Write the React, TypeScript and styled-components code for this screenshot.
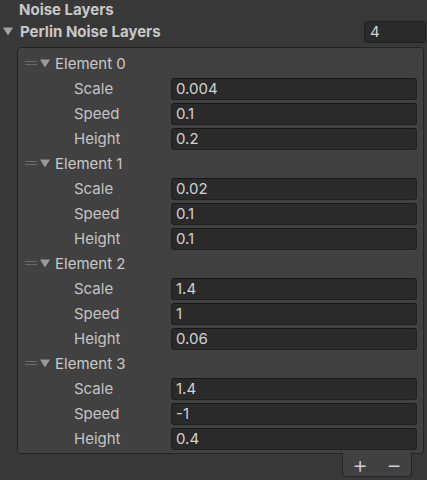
import React from "react";
import styled, { createGlobalStyle } from "styled-components";

type Layer = { scale: string; speed: string; height: string };

const layers: Layer[] = [
  { scale: "0.004", speed: "0.1", height: "0.2" },
  { scale: "0.02", speed: "0.1", height: "0.1" },
  { scale: "1.4", speed: "1", height: "0.06" },
  { scale: "1.4", speed: "-1", height: "0.4" },
];

const Triangle = ({ dim }: { dim?: boolean }) => (
  <svg width="10" height="9" viewBox="0 0 10 9">
    <path d="M0 0.5 H10 L5 8.5 Z" fill={dim ? "#999999" : "#a4a4a4"} />
  </svg>
);

const Handle = () => (
  <svg width="12" height="5" viewBox="0 0 12 5">
    <rect x="0" y="0" width="12" height="1" fill="#6a6a6a" />
    <rect x="0" y="3" width="12" height="1" fill="#6a6a6a" />
  </svg>
);

const Property = ({ label, value }: { label: string; value: string }) => (
  <PropRow>
    <PropLabel>{label}</PropLabel>
    <Field>{value}</Field>
  </PropRow>
);

export default function App() {
  return (
    <>
      <GlobalStyle />
      <Inspector>
        <SectionTitle>Noise Layers</SectionTitle>
        <FoldoutRow>
          <FoldArrow>
            <Triangle />
          </FoldArrow>
          <FoldoutLabel>Perlin Noise Layers</FoldoutLabel>
          <SizeField>4</SizeField>
        </FoldoutRow>
        <ListBox>
          {layers.map((layer, i) => (
            <ElementBlock key={i}>
              <ElementHeader>
                <HandleWrap>
                  <Handle />
                </HandleWrap>
                <Triangle dim />
                <ElementLabel>Element {i}</ElementLabel>
              </ElementHeader>
              <Property label="Scale" value={layer.scale} />
              <Property label="Speed" value={layer.speed} />
              <Property label="Height" value={layer.height} />
            </ElementBlock>
          ))}
        </ListBox>
        <FooterRow>
          <ListFooter>
            <FooterButton>+</FooterButton>
            <FooterButton>−</FooterButton>
          </ListFooter>
        </FooterRow>
      </Inspector>
    </>
  );
}

const GlobalStyle = createGlobalStyle`
  html, body {
    margin: 0;
    padding: 0;
    background: #383838;
  }
  body {
    font-family: Inter, "Noto Sans", sans-serif;
    font-size: 15px;
    color: #c4c4c4;
  }
`;

const Inspector = styled.div`
  width: 427px;
  height: 480px;
  overflow: hidden;
  background: #383838;
`;

const SectionTitle = styled.div`
  height: 19px;
  padding-left: 19px;
  display: flex;
  align-items: center;
  font-weight: 700;
  font-size: 15px;
  color: #c8c8c8;
`;

const FoldoutRow = styled.div`
  height: 25px;
  display: flex;
  align-items: center;
`;

const FoldArrow = styled.div`
  width: 17px;
  padding-left: 3px;
  display: flex;
  align-items: center;
`;

const FoldoutLabel = styled.div`
  flex: 1;
  font-weight: 700;
  font-size: 15px;
  color: #c8c8c8;
`;

const SizeField = styled.div`
  width: 55px;
  height: 20px;
  margin-right: 1px;
  padding-left: 5px;
  display: flex;
  align-items: center;
  background: #2a2a2a;
  border: 1px solid #212121;
  border-radius: 3px;
  color: #d2d2d2;
  font-size: 15px;
`;

const ListBox = styled.div`
  margin: 3px 3px 0 17px;
  padding: 3px 0 2px;
  background: #414141;
  border: 1px solid #242424;
  border-radius: 4px;
  box-sizing: border-box;
  height: 407px;
`;

const ElementBlock = styled.div`
  display: flex;
  flex-direction: column;
`;

const ElementHeader = styled.div`
  height: 25px;
  display: flex;
  align-items: center;
  padding-left: 7px;
`;

const HandleWrap = styled.div`
  display: flex;
  align-items: center;
  margin-right: 3px;
  margin-top: -1px;
`;

const ElementLabel = styled.div`
  margin-left: 5px;
  font-size: 15px;
  color: #c8c8c8;
`;

const PropRow = styled.div`
  height: 25px;
  display: flex;
  align-items: center;
`;

const PropLabel = styled.div`
  width: 97px;
  padding-left: 56px;
  font-size: 15px;
  color: #c4c4c4;
`;

const Field = styled.div`
  width: 246px;
  height: 22px;
  box-sizing: border-box;
  padding-left: 4px;
  display: flex;
  align-items: center;
  background: #2a2a2a;
  border: 1px solid #212121;
  border-top-color: #181818;
  border-radius: 3px;
  color: #d2d2d2;
  font-size: 15px;
`;

const FooterRow = styled.div`
  display: flex;
  justify-content: flex-end;
  padding-right: 15px;
`;

const ListFooter = styled.div`
  width: 70px;
  height: 24px;
  margin-top: -1px;
  box-sizing: border-box;
  display: flex;
  align-items: center;
  justify-content: space-around;
  background: #414141;
  border: 1px solid #242424;
  border-top: none;
  border-radius: 0 0 4px 4px;
`;

const FooterButton = styled.div`
  width: 24px;
  text-align: center;
  font-size: 24px;
  font-weight: 300;
  line-height: 22px;
  color: #d0d0d0;
`;
